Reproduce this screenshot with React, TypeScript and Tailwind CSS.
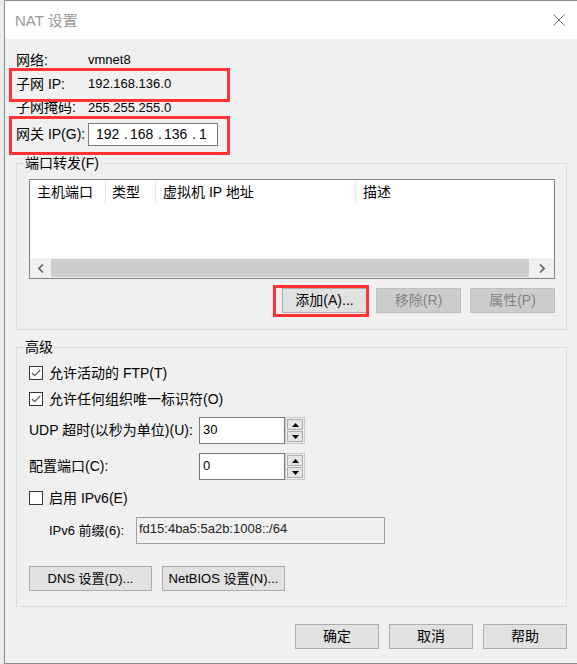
import React from "react";

const Tri = ({ up }: { up?: boolean }) => (
  <svg width="7" height="4" viewBox="0 0 7 4">
    {up ? <path d="M0 4 L3.5 0 L7 4 Z" fill="#000" /> : <path d="M0 0 L7 0 L3.5 4 Z" fill="#000" />}
  </svg>
);

const Spin = ({ value }: { value: string }) => (
  <div className="flex h-[27px]">
    <div className="w-[86px] h-full border border-[#7a7a7a] bg-white pl-[3px] pt-[4px] text-[13px] leading-[16px]">{value}</div>
    <div className="w-[20px] h-full border border-[#c8c8c8] bg-[#f0f0f0] flex flex-col p-[1px] gap-[1px]">
      <div className="flex-1 bg-[#e5e5e5] border border-[#adadad] flex items-center justify-center">
        <Tri up />
      </div>
      <div className="flex-1 bg-[#e5e5e5] border border-[#adadad] flex items-center justify-center">
        <Tri />
      </div>
    </div>
  </div>
);

const Check = ({ checked }: { checked?: boolean }) => (
  <div className="w-[14px] h-[14px] border border-[#333] bg-white flex items-center justify-center">
    {checked && (
      <svg width="10" height="8" viewBox="0 0 10 8">
        <path d="M0.8 3.8 L3.6 6.6 L9.2 1" stroke="#555" strokeWidth="1.2" fill="none" />
      </svg>
    )}
  </div>
);

export default function App() {
  return (
    <div className="relative w-[577px] h-[664px] flex bg-[#f0f0f0] overflow-hidden font-['Liberation_Sans','Noto_Sans_CJK_SC',sans-serif] text-black">
      <div className="w-[4px] h-full bg-[#ececec]" />
      <div className="flex-1 flex flex-col border-l border-t border-b border-[#8c8c8c]">
        {/* title bar */}
        <div className="h-[38px] bg-white flex items-center justify-between pl-[10px] pr-[12px]">
          <span className="text-[15px] text-[#9a9a9a] leading-none">NAT 设置</span>
          <svg width="12" height="12" viewBox="0 0 12 12">
            <path d="M0.5 0.5 L11.5 11.5 M11.5 0.5 L0.5 11.5" stroke="#6f6f6f" strokeWidth="1" />
          </svg>
        </div>
        {/* body */}
        <div className="flex-1 bg-[#f0f0f0] pl-[11px] pr-[10px] flex flex-col">
          <div className="pt-[9px] flex flex-col">
            <div className="h-[24px] flex items-center">
              <span className="w-[72px] text-[14px]">网络:</span>
              <span className="text-[13px]">vmnet8</span>
            </div>
            <div className="h-[24px] flex items-center">
              <span className="w-[72px] text-[14px]">子网 IP:</span>
              <span className="text-[13px]">192.168.136.0</span>
            </div>
            <div className="h-[23px] flex items-center">
              <span className="w-[72px] text-[14px]">子网掩码:</span>
              <span className="text-[13px]">255.255.255.0</span>
            </div>
            <div className="mt-[4px] h-[23px] flex items-center">
              <span className="w-[72px] text-[14px]">网关 IP(G):</span>
              <div className="w-[130px] h-full border border-[#7a7a7a] bg-white flex items-center pl-[7px] text-[14px]">
                <span className="w-[28px]">192</span>
                <span className="w-[6px]">.</span>
                <span className="w-[28px]">168</span>
                <span className="w-[6px]">.</span>
                <span className="w-[28px]">136</span>
                <span className="w-[7px]">.</span>
                <span>1</span>
              </div>
            </div>
          </div>

          {/* 端口转发 */}
          <fieldset className="mt-[9px] border border-[#dcdcdc] pl-[12px] pr-[11px] pb-[16px]">
            <legend className="-ml-[5px] px-[1px] text-[14px] leading-[16px]">端口转发(F)</legend>
            <div className="mt-[8px] h-[100px] border border-[#828282] bg-white flex flex-col">
              <div className="h-[25px] flex items-center text-[14px]">
                <div className="w-[75px] pl-[7px]">主机端口</div>
                <div className="w-[1px] h-[22px] bg-[#e5e5e5]" />
                <div className="w-[49px] pl-[6px]">类型</div>
                <div className="w-[1px] h-[22px] bg-[#e5e5e5]" />
                <div className="w-[199px] pl-[7px]">虚拟机 IP 地址</div>
                <div className="w-[1px] h-[22px] bg-[#e5e5e5]" />
                <div className="pl-[7px]">描述</div>
              </div>
              <div className="flex-1" />
              <div className="h-[20px] flex bg-[#f0f0f0]">
                <div className="w-[21px] flex items-center justify-center">
                  <svg width="6" height="9" viewBox="0 0 6 9">
                    <path d="M5 0.5 L1 4.5 L5 8.5" stroke="#606060" strokeWidth="1.6" fill="none" />
                  </svg>
                </div>
                <div className="flex-1 bg-[#cdcdcd] my-[1px]" />
                <div className="w-[25px] flex items-center justify-center">
                  <svg width="6" height="9" viewBox="0 0 6 9">
                    <path d="M1 0.5 L5 4.5 L1 8.5" stroke="#606060" strokeWidth="1.6" fill="none" />
                  </svg>
                </div>
              </div>
            </div>
            <div className="mt-[9px] flex justify-end gap-[9px] text-[14px]">
              <div className="w-[85px] h-[25px] border border-[#adadad] bg-[#e1e1e1] flex items-center justify-center">添加(A)...</div>
              <div className="w-[85px] h-[25px] border border-[#bfbfbf] bg-[#cccccc] text-[#838383] flex items-center justify-center">移除(R)</div>
              <div className="w-[85px] h-[25px] border border-[#bfbfbf] bg-[#cccccc] text-[#838383] flex items-center justify-center">属性(P)</div>
            </div>
          </fieldset>

          {/* 高级 */}
          <fieldset className="mt-[9px] border border-[#dcdcdc] pl-[12px] pr-[11px] pb-[15px] text-[14px]">
            <legend className="-ml-[5px] px-[1px] leading-[16px]">高级</legend>
            <div className="mt-[8px] h-[20px] flex items-center gap-[6px]">
              <Check checked />
              <span>允许活动的 FTP(T)</span>
            </div>
            <div className="mt-[6px] h-[20px] flex items-center gap-[6px]">
              <Check checked />
              <span>允许任何组织唯一标识符(O)</span>
            </div>
            <div className="mt-[8px] flex items-center">
              <span className="w-[170px]">UDP 超时(以秒为单位)(U):</span>
              <Spin value="30" />
            </div>
            <div className="mt-[9px] flex items-center">
              <span className="w-[170px]">配置端口(C):</span>
              <Spin value="0" />
            </div>
            <div className="mt-[8px] h-[20px] flex items-center gap-[6px]">
              <Check />
              <span>启用 IPv6(E)</span>
            </div>
            <div className="mt-[9px] h-[27px] flex items-center pl-[20px]">
              <span className="w-[87px] text-[13px]">IPv6 前缀(6):</span>
              <div className="w-[249px] h-full border border-[#a0a0a0] bg-[#f0f0f0] pl-[2px] pt-[3px] text-[13px] leading-[16px] text-[#222]">fd15:4ba5:5a2b:1008::/64</div>
            </div>
            <div className="mt-[22px] flex gap-[10px] text-[13px]">
              <div className="w-[123px] h-[25px] border border-[#adadad] bg-[#e1e1e1] flex items-center justify-center">DNS 设置(D)...</div>
              <div className="w-[123px] h-[25px] border border-[#adadad] bg-[#e1e1e1] flex items-center justify-center">NetBIOS 设置(N)...</div>
            </div>
          </fieldset>

          <div className="mt-[17px] flex justify-end gap-[10px] text-[14px]">
            <div className="w-[84px] h-[25px] border border-[#adadad] bg-[#e1e1e1] flex items-center justify-center">确定</div>
            <div className="w-[84px] h-[25px] border border-[#adadad] bg-[#e1e1e1] flex items-center justify-center">取消</div>
            <div className="w-[84px] h-[25px] border border-[#adadad] bg-[#e1e1e1] flex items-center justify-center">帮助</div>
          </div>
        </div>
      </div>

      {/* red annotation boxes */}
      <div className="absolute left-[9px] top-[68px] w-[221px] h-[34px] border-[3px] border-[#ff3333]" />
      <div className="absolute left-[9px] top-[116px] w-[221px] h-[39px] border-[3px] border-[#ff3333]" />
      <div className="absolute left-[273px] top-[285px] w-[96px] h-[32px] border-[3px] border-[#ff3333]" />
    </div>
  );
}
